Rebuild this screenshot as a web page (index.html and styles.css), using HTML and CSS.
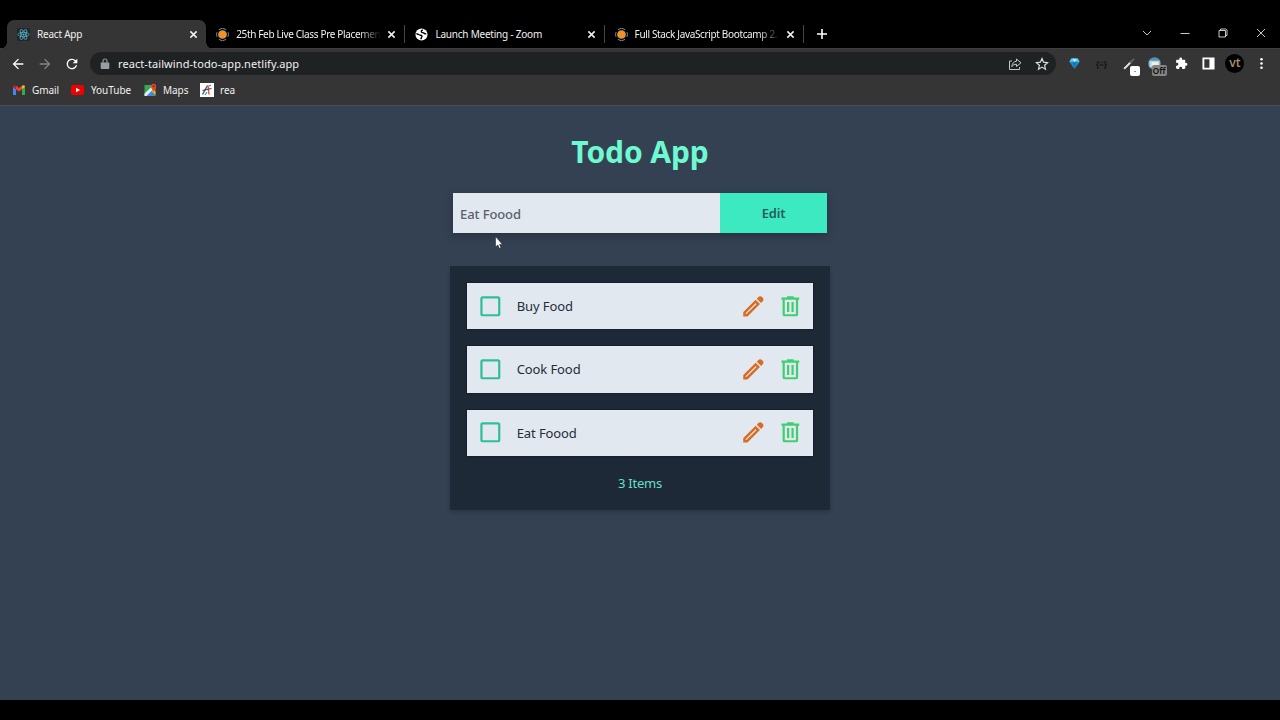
FILE: index.html
```html
<!DOCTYPE html>
<html lang="en">
<head>
    <meta charset="UTF-8">
    <meta name="viewport" content="width=device-width, initial-scale=1.0">
    <title>React App</title>
    <link rel="stylesheet" href="styles.css">
</head>
<body>
    <!-- Shared icons -->
    <svg class="sprite">
        <symbol id="close" viewBox="0 0 10 10"><path d="M1.500 1.500l7 7M8.500 1.500l-7 7" stroke="currentColor" stroke-width="1.700"/></symbol>
        <symbol id="class-logo" viewBox="0 0 14 14">
            <circle cx="7" cy="7" r="4.700" fill="#f0922b"/>
            <path d="M3 1.800A6.400 6.400 0 0 1 11 1.800M3 12.200a6.400 6.400 0 0 0 8 0M1.100 4.500a6.400 6.400 0 0 0 0 5M12.900 4.500a6.400 6.400 0 0 1 0 5" fill="none" stroke="#6aa3c4" stroke-width="1"/>
        </symbol>
        <symbol id="checkbox" viewBox="0 0 24 24"><path fill="currentColor" d="M19,3H5C3.89,3 3,3.89 3,5V19A2,2 0 0,0 5,21H19A2,2 0 0,0 21,19V5C21,3.89 20.1,3 19,3M19,5V19H5V5H19Z"/></symbol>
        <symbol id="pencil" viewBox="0 0 24 24">
            <path d="M4 17.700L14.060 7.600l2.350 2.350L6.300 20H4z" fill="none" stroke="currentColor" stroke-width="2.200"/>
            <path d="M15.100 5.100l1.400-1.400c1.100-1.100 2.500-.9 3.500.1l.3.300c1 1 1.100 2.300.1 3.300l-1.500 1.500z" fill="currentColor"/>
        </symbol>
        <symbol id="trash" viewBox="0 0 24 24"><path fill="currentColor" d="M9,3V4H4V6H5V19A2,2 0 0,0 7,21H17A2,2 0 0,0 19,19V6H20V4H15V3H9M7,6H17V19H7V6M9,8V17H11V8H9M13,8V17H15V8H13Z"/></symbol>
    </svg>

    <header class="browser">
        <div class="tabs">
            <div class="tab active">
                <svg class="favicon" viewBox="0 0 14 14">
                    <rect width="14" height="14" rx="1" fill="#20282d"/>
                    <g fill="none" stroke="#5fb9d0" stroke-width=".8">
                        <ellipse cx="7" cy="7" rx="6" ry="2.300"/>
                        <ellipse cx="7" cy="7" rx="6" ry="2.300" transform="rotate(60 7 7)"/>
                        <ellipse cx="7" cy="7" rx="6" ry="2.300" transform="rotate(120 7 7)"/>
                    </g>
                    <circle cx="7" cy="7" r="1.100" fill="#5fb9d0"/>
                </svg>
                <span class="tab-title">React App</span>
                <svg class="close"><use href="#close"/></svg>
            </div>
            <div class="tab">
                <svg class="favicon"><use href="#class-logo"/></svg>
                <span class="tab-title fade">25th Feb Live Class Pre Placemen</span>
                <svg class="close"><use href="#close"/></svg>
            </div>
            <div class="tab">
                <svg class="favicon" viewBox="0 0 14 14">
                    <circle cx="7" cy="7" r="6.500" fill="#fff"/>
                    <path d="M1.500 6.200c2 0 2.600 1.500 4.300 1.600 2 .1 2.200 1.300 1.200 2.300l-.8 2M8.500 2.200C6.200 2.500 6.200 4.800 8.200 5s1.800 1.600 4 1.300" fill="none" stroke="#000" stroke-width="1.500"/>
                </svg>
                <span class="tab-title">Launch Meeting - Zoom</span>
                <svg class="close"><use href="#close"/></svg>
            </div>
            <div class="tab">
                <svg class="favicon"><use href="#class-logo"/></svg>
                <span class="tab-title fade">Full Stack JavaScript Bootcamp 2.</span>
                <svg class="close"><use href="#close"/></svg>
            </div>
            <svg class="new-tab" viewBox="0 0 12 12"><path d="M6 1v10M1 6h10" stroke="#fff" stroke-width="1.600"/></svg>
            <div class="window-controls">
                <svg viewBox="0 0 10 10"><path d="M1 3l4 4 4-4"/></svg>
                <svg viewBox="0 0 10 10"><path d="M.5 5.500h9"/></svg>
                <svg viewBox="0 0 10 10"><path d="M1 2.500h6.500v6.500H1zM2.500 2.500V1h5q1.500 0 1.500 1.500v5H7.500"/></svg>
                <svg viewBox="0 0 10 10"><path d="M1 1l8 8M9 1L1 9"/></svg>
            </div>
        </div>

        <div class="toolbar">
            <div class="nav">
                <svg viewBox="0 0 24 24" fill="#fff"><path d="M20 11H7.830l5.590-5.590L12 4l-8 8 8 8 1.410-1.410L7.830 13H20v-2z"/></svg>
                <svg viewBox="0 0 24 24" fill="#858585"><path d="M12 4l-1.410 1.410L16.170 11H4v2h12.170l-5.580 5.590L12 20l8-8z"/></svg>
                <svg viewBox="0 0 24 24" fill="#fff"><path d="M17.650 6.350A7.958 7.958 0 0 0 12 4a8 8 0 1 0 7.730 10h-2.080A6 6 0 1 1 12 6c1.660 0 3.140.69 4.220 1.780L13 11h7V4l-2.350 2.350z"/></svg>
            </div>
            <div class="address">
                <svg class="lock" viewBox="0 0 10 12"><path d="M1.500 4.500h7q.8 0 .8.8v4.900q0 .8-.8.8h-7q-.8 0-.8-.8V5.300q0-.8.8-.8z" fill="#9a9da0"/><path d="M3 5V3a2 2 0 0 1 4 0v2" fill="none" stroke="#9a9da0" stroke-width="1.100"/></svg>
                <span class="url">react-tailwind-todo-app.netlify.app</span>
                <svg class="address-icon" viewBox="0 0 14 14" fill="none" stroke="#c4c7c9"><path d="M4 4H1.500v8.500h10V10M8.500 2l4.500 3.800-4.500 3.700V7.300C6.300 7.200 5 8 3.800 9.700 4.200 6.500 5.700 4.600 8.500 4.200z"/></svg>
                <svg class="address-icon" viewBox="0 0 14 14" fill="none" stroke="#dcdcdc" stroke-width="1.200"><path d="M7 1.500l1.600 3.700 4 .4-3 2.700.9 3.900L7 10.100l-3.500 2.100.9-3.900-3-2.700 4-.4z"/></svg>
            </div>
            <div class="extensions">
                <div class="ext">
                    <svg viewBox="0 0 14 14"><path d="M3.500 1.500h7L12.500 5 7 12.800 1.500 5z" fill="#1c8fd0"/><path d="M3.500 1.500h7L12.500 5h-11z" fill="#5cc8f0"/><path d="M4.700 5h4.600L7 12.800z" fill="#1273b8"/><path d="M4.500 2h5L7 6z" fill="#b5e6f8"/></svg>
                </div>
                <div class="ext"><span class="json">{≡}</span></div>
                <div class="ext">
                    <svg viewBox="0 0 14 14"><path d="M2 12l6-6 1 1-6 6z" fill="#ddd" stroke="#ddd"/><path d="M8.500 4.500l2 2M10 5l3-3" stroke="#666" stroke-width="1.600"/></svg>
                    <span class="badge dot">.</span>
                </div>
                <div class="ext">
                    <svg viewBox="0 0 14 14"><circle cx="7" cy="7" r="6.800" fill="#5790b5"/><path d="M1.500 4h11v7h-11z" fill="#b8d7e8"/><path d="M4 5.500h7V10H4z" fill="#f4f2dc"/></svg>
                    <span class="badge off">Off</span>
                </div>
                <div class="ext">
                    <svg viewBox="0 0 24 24"><path fill="#fff" d="M20.500 11H19V7c0-1.100-.9-2-2-2h-4V3.500a2.500 2.500 0 0 0-5 0V5H4c-1.100 0-2 .9-2 2v3.800h1.500a2.700 2.700 0 0 1 0 5.400H2V20c0 1.100.9 2 2 2h3.800v-1.500a2.700 2.700 0 0 1 5.400 0V22H17c1.100 0 2-.9 2-2v-4h1.500a2.500 2.500 0 0 0 0-5z"/></svg>
                </div>
                <div class="ext">
                    <svg viewBox="0 0 14 14"><path d="M.5.500h13v13H.5zM2.500 2.500v9h5.500v-9z" fill="#fff" fill-rule="evenodd"/></svg>
                </div>
                <div class="ext"><span class="avatar">vt</span></div>
                <div class="ext">
                    <svg viewBox="0 0 14 14" fill="#fff"><circle cx="7" cy="2.500" r="1.400"/><circle cx="7" cy="7" r="1.400"/><circle cx="7" cy="11.500" r="1.400"/></svg>
                </div>
            </div>
        </div>

        <nav class="bookmarks">
            <a class="bookmark gmail">
                <svg viewBox="0 0 14 14"><path d="M1 12V4l3 2.300V12z" fill="#4285f4"/><path d="M10 12V6.300L13 4v8z" fill="#34a853"/><path d="M4 2.800l3 2.300 3-2.300v3.500L7 8.600 4 6.300z" fill="#ea4335"/><path d="M1 4c0-1.900 1.700-2.200 3-1.200v3.500L1 4z" fill="#c5221f"/><path d="M10 2.800c1.300-1 3-.7 3 1.200l-3 2.300z" fill="#fbbc04"/></svg>
                Gmail
            </a>
            <a class="bookmark youtube">
                <svg viewBox="0 0 14 14"><rect x="0" y="2" width="13" height="10" rx="2" fill="#f00000"/><path d="M5 4.800L9 7l-4 2.200z" fill="#fff"/></svg>
                YouTube
            </a>
            <a class="bookmark maps">
                <svg viewBox="0 0 14 14"><path d="M1.500 2h11v11h-11z" fill="#34a853"/><path d="M3 13l5-5 4.500 5z" fill="#4285f4"/><path d="M1.500 10.500l8-7.500 2 2-8 8h-2z" fill="#e8eaed"/><path d="M8.500 8l4 4V8.500L10 6.500z" fill="#fbbc04"/><path d="M10.500 9C9.500 6.500 8 5.500 8 3.300a2.600 2.600 0 0 1 5.200 0C13.200 5.500 11.500 6.500 10.500 9z" fill="#ea4335"/><circle cx="10.600" cy="3.300" r="1" fill="#9c1c16"/></svg>
                Maps
            </a>
            <a class="bookmark">
                <svg viewBox="0 0 14 14"><path d="M0 0h14v14H0z" fill="#fff"/><path d="M2.500 11.500l5-9" stroke="#56606a" stroke-width="1.500"/><path d="M8 2.500l1 9" stroke="#de5b48" stroke-width="1.500"/><path d="M2.500 7.500l9-2" stroke="#444" stroke-width="1.100"/><path d="M5 12l2-3M9 3l2-1" stroke="#408cc4" stroke-width="1.200"/></svg>
                rea
            </a>
        </nav>
    </header>

    <main class="app">
        <h1>Todo App</h1>
        <form class="todo-form">
            <input type="text" value="Eat Foood">
            <button type="button">Edit</button>
        </form>
        <section class="list">
            <div class="todo">
                <svg class="check"><use href="#checkbox"/></svg>
                <span>Buy Food</span>
                <svg class="edit"><use href="#pencil"/></svg>
                <svg class="delete"><use href="#trash"/></svg>
            </div>
            <div class="todo">
                <svg class="check"><use href="#checkbox"/></svg>
                <span>Cook Food</span>
                <svg class="edit"><use href="#pencil"/></svg>
                <svg class="delete"><use href="#trash"/></svg>
            </div>
            <div class="todo">
                <svg class="check"><use href="#checkbox"/></svg>
                <span>Eat Foood</span>
                <svg class="edit"><use href="#pencil"/></svg>
                <svg class="delete"><use href="#trash"/></svg>
            </div>
            <p class="count">3 Items</p>
        </section>
        <svg class="cursor" viewBox="0 0 8 13"><path d="M.5.500v10.500l2.300-2 1.600 3.500 1.600-.7-1.500-3.400h3z" fill="#fff" stroke="#111" stroke-width=".5"/></svg>
    </main>
</body>
</html>
```

FILE: styles.css
```css
:root {
    --chrome: #353535;
    --background: #344153;
    --panel: #1e2938;
    --row: #e2e8ef;
}

* {
    margin: 0;
    padding: 0;
    box-sizing: border-box;
}

body {
    font-family: "Noto Sans", "Open Sans", sans-serif;
    background: #000;
    height: 720px;
    overflow: hidden;
    display: flex;
    flex-direction: column;
}

svg {
    display: block;
    flex: none;
}

.sprite {
    position: absolute;
    width: 0;
    height: 0;
}

/* Browser window */
.browser {
    height: 106px;
    color: #f1f1f1;
    font-size: 10px;
    background: var(--chrome);
    border-bottom: 1px solid #4b4e52;
}

.tabs {
    display: flex;
    height: 49px;
    padding: 20px 0 0 7px;
    background: #000;
    border-bottom: 1px solid #3f3f3f;
}

.tab {
    position: relative;
    width: 199.200px;
    height: 28px;
    padding: 0 8px 0 10px;
    display: flex;
    align-items: center;
}

.tab.active {
    height: 29px;
    padding-bottom: 1px;
    background: var(--chrome);
    border-radius: 7px 7px 0 0;
}

.tab.active::before,
.tab.active::after {
    content: "";
    position: absolute;
    bottom: 0;
    width: 7px;
    height: 7px;
}

.tab.active::before {
    right: 100%;
    background: radial-gradient(circle at 0 0, transparent 6.500px, var(--chrome) 7px);
}

.tab.active::after {
    left: 100%;
    background: radial-gradient(circle at 100% 0, transparent 6.500px, var(--chrome) 7px);
}

.tab:not(.active) {
    border-right: 1px solid transparent;
    border-image: linear-gradient(transparent 20%, #444 20%, #444 80%, transparent 80%) 1;
}

.favicon {
    width: 13px;
    height: 13px;
    margin-right: 7px;
}

.tab-title {
    width: 147px;
    white-space: nowrap;
    letter-spacing: -0.220px;
}

.tab-title.fade {
    letter-spacing: -0.350px;
    mask-image: linear-gradient(to right, #000 85%, transparent);
}

.close {
    width: 9px;
    height: 9px;
    margin-left: 6px;
}

.new-tab {
    width: 12px;
    height: 12px;
    margin: 8px 0 0 12px;
}

.window-controls {
    display: flex;
    align-items: center;
    margin-left: auto;
    height: 26px;
}

.window-controls svg {
    width: 10px;
    height: 10px;
    margin: 0 14px;
    fill: none;
    stroke: #dedede;
    stroke-width: .9;
}

.toolbar {
    display: flex;
    align-items: center;
    height: 29px;
    padding-right: 5px;
}

.nav {
    display: flex;
    gap: 11px;
    width: 90px;
    padding-left: 10px;
}

.nav svg {
    width: 16px;
    height: 16px;
}

.address {
    display: flex;
    align-items: center;
    width: 966px;
    height: 23px;
    padding: 0 7px 0 10px;
    border-radius: 12px;
    background: #1f2223;
}

.lock {
    width: 10px;
    height: 12px;
}

.url {
    flex: 1;
    margin-left: 8px;
    font-size: 11px;
    letter-spacing: 0.080px;
}

.address-icon {
    width: 14px;
    height: 14px;
    margin-left: 13px;
}

.extensions {
    display: flex;
    margin-left: auto;
}

.ext {
    position: relative;
    width: 26.700px;
    height: 24px;
    display: flex;
    align-items: center;
    justify-content: center;
}

.ext svg {
    width: 13px;
    height: 13px;
}

.json {
    color: #111;
    font-size: 8px;
    font-weight: bold;
}

.badge {
    position: absolute;
    border-radius: 2px;
    color: #111;
    text-align: center;
}

.badge.dot {
    left: 15px;
    top: 14px;
    width: 10px;
    height: 10px;
    background: #fff;
    font-size: 9px;
    line-height: 6px;
}

.badge.off {
    left: 10px;
    top: 13px;
    width: 15px;
    height: 11px;
    background: #858585;
    font-size: 8.500px;
    font-weight: 600;
    line-height: 11px;
}

.avatar {
    width: 19px;
    height: 19px;
    border-radius: 50%;
    background: #000;
    color: #a18d6a;
    font-size: 12px;
    font-weight: 600;
    line-height: 17px;
    text-align: center;
}

.bookmarks {
    display: flex;
    padding: 5px 0 0 12px;
    letter-spacing: -0.050px;
}

.bookmark {
    display: flex;
    align-items: center;
    gap: 6px;
    height: 14px;
    width: 44px;
}

.bookmark svg {
    width: 14px;
    height: 14px;
}

.gmail {
    width: 59px;
}

.youtube {
    width: 72px;
}

.maps {
    width: 57px;
}

/* Todo page */
.app {
    position: relative;
    height: 594px;
    padding-top: 23px;
    background: var(--background);
    display: flex;
    flex-direction: column;
    align-items: center;
}

h1 {
    color: #6ef9d1;
    font-size: 30px;
    line-height: 46px;
    font-weight: 700;
    letter-spacing: -0.100px;
}

.todo-form {
    display: flex;
    width: 374px;
    height: 40px;
    margin-top: 18px;
    box-shadow: 0 3px 8px rgba(0, 0, 0, 0.25);
}

.todo-form input {
    width: 267px;
    padding: 2px 7px 0;
    border: none;
    outline: none;
    background: var(--row);
    color: #59616c;
    font: 500 13px "Noto Sans", sans-serif;
    letter-spacing: -0.100px;
}

.todo-form button {
    flex: 1;
    border: none;
    background: #3ce9c1;
    color: #285a5c;
    font: 600 13px "Noto Sans", sans-serif;
    letter-spacing: -0.200px;
}

.list {
    width: 380px;
    height: 243.500px;
    margin-top: 33px;
    padding: 17px 17px 0;
    background: var(--panel);
    box-shadow: 0 2px 4px rgba(0, 0, 0, 0.2);
}

.todo {
    display: flex;
    align-items: center;
    height: 46.300px;
    margin-bottom: 17px;
    padding: 0 9.500px;
    background: var(--row);
    color: #242c3a;
    font-size: 13px;
    letter-spacing: -0.100px;
    box-shadow: 0 0 2px #0b111b;
}

.todo svg {
    width: 26.700px;
    height: 26.700px;
}

.todo span {
    flex: 1;
    margin-left: 13.500px;
}

.check {
    color: #2fbd9b;
}

.edit {
    color: #d96c25;
}

.delete {
    margin-left: 10px;
    color: #40cf70;
}

.count {
    color: #65dfc5;
    font-size: 13px;
    line-height: 20px;
    letter-spacing: -0.250px;
    text-align: center;
}

.cursor {
    position: absolute;
    left: 495px;
    top: 130px;
    width: 8px;
    height: 13px;
}
```
